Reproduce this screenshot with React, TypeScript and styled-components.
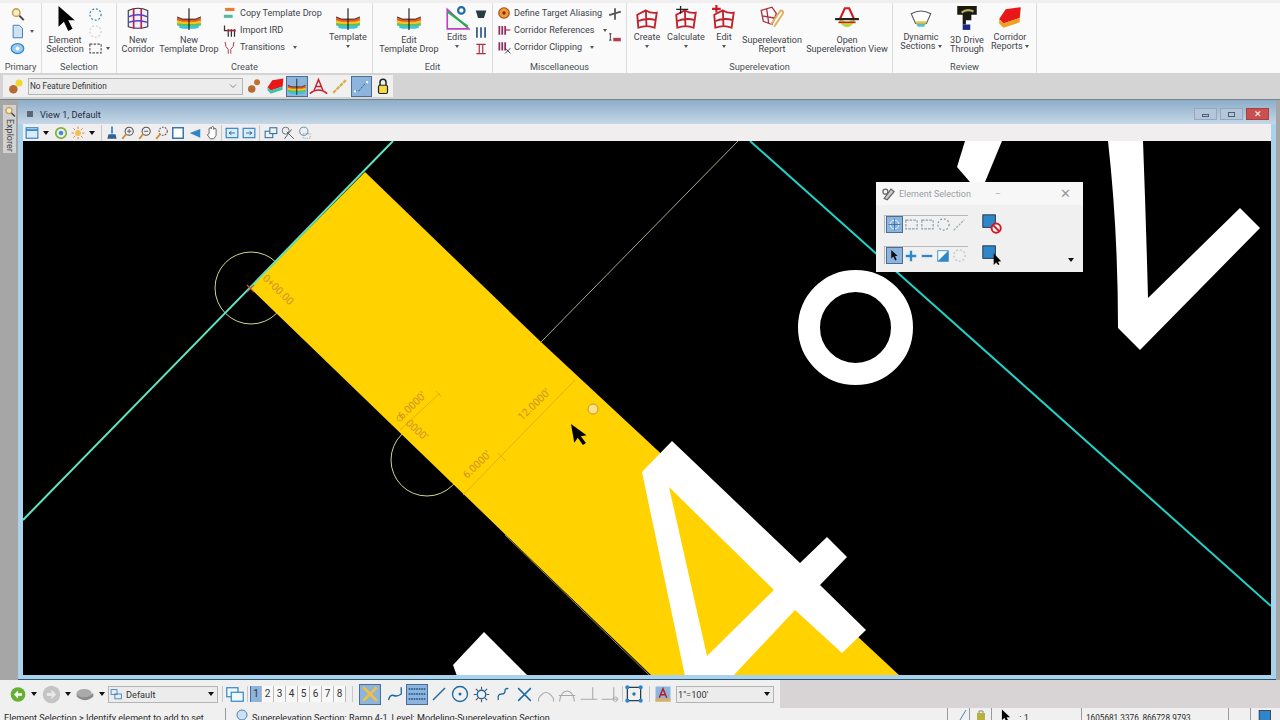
import React, { ReactNode } from "react"
import styled, { createGlobalStyle } from "styled-components"

const GlobalStyle = createGlobalStyle`
  html, body { margin: 0; padding: 0; background: #d6d4d4; overflow: hidden; }
  body { font-family: Roboto, "Liberation Sans", Arial, sans-serif; color: #3a3f45; }
`

const Ico = ({ s = 16, children }: { s?: number; children: ReactNode }) => (
  <svg width={s} height={s} viewBox="0 0 24 24" fill="none">
    {children}
  </svg>
)

const Pointer = () => <path d="M5 1 V19 L9.5 15 L13 23 L16.5 21.5 L13 14 L19 14 Z" fill="#000" />

const Bands = ({ lift = 0 }: { lift?: number }) => (
  <g transform={`translate(0 ${lift})`}>
    <path d="M1 11 L6 13 H18 L23 11 V15 L18 16 H6 L1 15Z" fill="#e8572a" />
    <path d="M1 14 L6 15.5 H18 L23 14 V17 L18 18 H6 L1 17Z" fill="#f5c518" />
    <path d="M1 16.5 L6 17.5 H18 L23 16.5 V19 L18 20 H6 L1 19Z" fill="#5cc06a" />
    <path d="M3 18.5 L6 19.5 H18 L21 18.5 V21 L18 22 H6 L3 21Z" fill="#3cc4dc" />
    <path d="M1 11 L6 13 H18 L23 11" stroke="#222" strokeWidth="0.8" />
  </g>
)

const TemplateIco = ({ s = 26 }: { s?: number }) => (
  <Ico s={s}>
    <Bands />
    <path d="M12 3 V23" stroke="#111" strokeWidth="1" />
  </Ico>
)

const Grid = () => (
  <path
    d="M3 9 L11 5 Q16 8 21 7 L19 21 Q12 18 4 21Z M3.5 15 Q12 11.5 20 14 M11 5.5 L11.5 19"
    stroke="#c2202c"
    strokeWidth="1.7"
  />
)

const Zoomer = ({ s = 15 }: { s?: number }) => (
  <Ico s={s}>
    <circle cx="10" cy="9" r="6" stroke="#c8a24a" strokeWidth="2.5" fill="#f6edd0" />
    <path d="M15 14 L22 21" stroke="#444" strokeWidth="3" />
  </Ico>
)

const Caret = styled.span`
  display: inline-block;
  width: 0;
  height: 0;
  border-left: 2.5px solid transparent;
  border-right: 2.5px solid transparent;
  border-top: 3px solid #555;
  vertical-align: middle;
`

const DarkCaret = styled(Caret)`
  border-left-width: 3.5px;
  border-right-width: 3.5px;
  border-top: 4px solid #111;
`

const Page = styled.div`
  width: 1280px;
  height: 720px;
  display: flex;
  flex-direction: column;
  overflow: hidden;
`

const Ribbon = styled.div`
  height: 73px;
  flex: none;
  display: flex;
  background: #fafafa;
  border-top: 3px solid #f0eeee;
  box-sizing: border-box;
`

const Group = styled.section<{ $w: number }>`
  width: ${(p) => p.$w}px;
  flex: none;
  box-sizing: border-box;
  border-right: 1px solid #dcdcdc;
  display: flex;
  flex-direction: column;
  padding-top: 2px;
`

const GroupBody = styled.div`
  height: 56px;
  display: flex;
`

const GroupLabel = styled.div`
  font-size: 9.2px;
  line-height: 11px;
  text-align: center;
  color: #4a4f55;
`

const TallButton = styled.div<{ $w: number; $raised?: boolean }>`
  width: ${(p) => p.$w}px;
  flex: none;
  display: flex;
  flex-direction: column;
  align-items: center;
  font-size: 9.1px;
  line-height: 8.6px;
  text-align: center;
  color: #3f444a;
  white-space: nowrap;
  svg { height: 26px; flex: none; }
  & > div { margin-top: ${(p) => (p.$raised ? 2 : 5)}px; }
`

const MiniColumn = styled.div<{ $w: number; $left?: number }>`
  width: ${(p) => p.$w}px;
  margin-left: ${(p) => p.$left ?? 0}px;
  flex: none;
  display: flex;
  flex-direction: column;
  align-items: center;
  justify-content: space-between;
  height: 49px;
  padding-top: 2px;
`

const MiniRow = styled.div`
  display: flex;
  align-items: center;
  gap: 5px;
  align-self: flex-start;
  margin-left: 9.5px;
`

const SelectRow = styled(MiniRow)`
  margin-left: -0.5px;
  gap: 3px;
  white-space: nowrap;
`

const ListColumn = styled.div<{ $w: number; $left?: number }>`
  width: ${(p) => p.$w}px;
  margin-left: ${(p) => p.$left ?? 0}px;
  flex: none;
  display: flex;
  flex-direction: column;
  gap: 3px;
  padding-top: 1px;
`

const ListRow = styled.div`
  height: 14px;
  display: flex;
  align-items: center;
  gap: 3px;
  font-size: 9.1px;
  color: #3f444a;
  white-space: nowrap;
  ${Caret} { margin-left: 5px; }
`

const ContextBar = styled.div`
  height: 27px;
  flex: none;
  box-sizing: border-box;
  background: #d4d4d4;
  border-bottom: 1px solid #77838d;
  padding: 2px 0 2px 3px;
`

const Strip = styled.div<{ $w: number }>`
  width: ${(p) => p.$w}px;
  height: 100%;
  background: #f1f0f0;
  display: flex;
  align-items: center;
`

const Cell = styled.div<{ $w?: number; $on?: boolean }>`
  width: ${(p) => p.$w ?? 21.5}px;
  height: 21px;
  flex: none;
  box-sizing: border-box;
  display: flex;
  align-items: center;
  justify-content: center;
  background: ${(p) => (p.$on ? "#8db4dc" : "transparent")};
  border: ${(p) => (p.$on ? "1px solid #4a6f96" : "none")};
`

const Combo = styled.div<{ $w: number; $left?: number; $size?: number }>`
  width: ${(p) => p.$w}px;
  margin-left: ${(p) => p.$left ?? 0}px;
  height: 17px;
  flex: none;
  box-sizing: border-box;
  border: 1px solid #b4b4b4;
  background: #ececec;
  display: flex;
  align-items: center;
  justify-content: space-between;
  padding: 0 3px 0 1px;
  font-size: ${(p) => p.$size ?? 9.2}px;
  color: #333;
`

const ComboLabel = styled.span`
  display: flex;
  align-items: center;
  gap: 3px;
`

const Workspace = styled.div`
  height: 580px;
  flex: none;
  display: flex;
  background: #a6a6a6;
`

const Rail = styled.div`
  width: 18px;
  flex: none;
  padding: 5px 0 0 3px;
  box-sizing: border-box;
`

const RailTab = styled.div`
  width: 13px;
  height: 48px;
  box-sizing: border-box;
  background: #d2d2d2;
  display: flex;
  flex-direction: column;
  align-items: center;
  padding-top: 1px;
  gap: 1px;
`

const RailText = styled.span`
  writing-mode: vertical-rl;
  font-size: 9px;
  color: #444;
`

const ViewWindow = styled.div`
  width: 1258px;
  flex: none;
  display: flex;
  flex-direction: column;
  box-sizing: border-box;
  background: #a9d2ec;
  padding: 0 5px 4px;
  border-bottom: 1px solid #2c5570;
`

const TitleBar = styled.div`
  height: 24px;
  flex: none;
  box-sizing: border-box;
  margin: 0 -5px;
  padding: 4px 7px 0 9px;
  background: linear-gradient(#8cadc9, #c5d7e6);
  display: flex;
  align-items: center;
  font-size: 9.2px;
  color: #1f2f3f;
  gap: 6px;
`

const TitleSquare = styled.span`
  width: 6px;
  height: 6px;
  background: #5c6670;
  margin-right: 1px;
`

const WinButtons = styled.div`
  margin-left: auto;
  display: flex;
  gap: 3px;
`

const WinButton = styled.div<{ $close?: boolean }>`
  width: 23px;
  height: 12px;
  box-sizing: border-box;
  background: ${(p) => (p.$close ? "#c8504e" : "#b4c7da")};
  border: 1px solid ${(p) => (p.$close ? "#a84040" : "#94a9be")};
  display: flex;
  align-items: center;
  justify-content: center;
  font-size: 9px;
  line-height: 9px;
  color: #fff;
`

const WinGlyph = styled.span<{ $flat?: boolean }>`
  width: 7px;
  height: ${(p) => (p.$flat ? 3 : 5)}px;
  margin-top: ${(p) => (p.$flat ? 3 : 0)}px;
  box-sizing: border-box;
  border: 1px solid #4c5f72;
`

const ViewTools = styled.div`
  height: 17px;
  flex: none;
  background: #f0eeee;
  display: flex;
  align-items: center;
  padding-left: 1px;
  ${Cell} { height: 17px; }
`

const ToolSep = styled.span<{ $w?: number }>`
  width: ${(p) => p.$w ?? 7}px;
  flex: none;
  height: 16px;
  display: flex;
  justify-content: center;
  &::before { content: ""; width: 1px; background: #c8c8c8; }
`

const Canvas = styled.div`
  position: relative;
  flex: 1;
  background: #000;
  overflow: hidden;
  svg.scene { display: block; }
`

const DimLabel = styled.text`
  font-family: Roboto, "Liberation Sans", sans-serif;
  font-size: 10.5px;
  fill: #c9942c;
`

const Dialog = styled.div`
  position: absolute;
  left: 853px;
  top: 41px;
  width: 207px;
  height: 90px;
  background: #f0f0f0;
`

const DialogTitle = styled.div`
  height: 23px;
  background: #f7f7f7;
  display: flex;
  align-items: center;
  padding: 0 12px 0 5px;
  gap: 3px;
  font-size: 9px;
  color: #9a9ea2;
`

const DialogMin = styled.span`
  margin-left: 21px;
  color: #aaa;
`

const DialogClose = styled.span`
  margin-left: auto;
  color: #999;
  font-size: 13px;
  line-height: 13px;
`

const DialogBody = styled.div`
  padding: 10px 9px 0 8px;
  display: flex;
  flex-direction: column;
  gap: 13px;
`

const DialogRow = styled.div`
  display: flex;
  align-items: center;
  height: 18px;
`

const SelectStrip = styled.div`
  width: 84px;
  height: 18px;
  flex: none;
  display: flex;
  box-sizing: border-box;
  border-top: 1px solid #b8b8b8;
  border-left: 1px solid #b8b8b8;
  padding-left: 1px;
  margin-right: 14px;
  ${Cell} { height: 17px; }
`

const RowCaret = styled.div`
  margin-left: auto;
  padding-top: 8px;
`

const BottomBar = styled.div`
  height: 28px;
  flex: none;
  display: flex;
  background: #d8d4d6;
`

const BottomStrip = styled.div`
  width: 780px;
  flex: none;
  box-sizing: border-box;
  background: #f0f0f0;
  display: flex;
  align-items: center;
  padding-left: 10px;
`

const PageNum = styled.div<{ $on?: boolean }>`
  width: 12px;
  height: 16px;
  flex: none;
  box-sizing: border-box;
  background: ${(p) => (p.$on ? "#8db4dc" : "#f8f8f8")};
  border-right: 1px solid #bbb;
  border-left: ${(p) => (p.$on ? "1px solid #4a6f96" : "none")};
  font-size: 10px;
  line-height: 16px;
  text-align: center;
  color: #333;
`

const StatusBar = styled.div`
  height: 12px;
  flex: none;
  background: #f0f0f0;
  display: flex;
  overflow: hidden;
  font-size: 9.1px;
  line-height: 12px;
  color: #2a2a2a;
  white-space: nowrap;
`

const StatusCell = styled.div<{ $w: number; $pad?: number; $line?: boolean; $size?: number }>`
  width: ${(p) => p.$w}px;
  flex: none;
  box-sizing: border-box;
  padding: 4px 0 0 ${(p) => p.$pad ?? 0}px;
  border-right: ${(p) => (p.$line ? "1px solid #999" : "none")};
  display: flex;
  gap: 4px;
  font-size: ${(p) => p.$size ?? 9.1}px;
  svg { flex: none; margin-top: -3px; }
`

const Blue = "#2f86c8"

const Dashed = ({ round, color = "#8a9aa8" }: { round?: boolean; color?: string }) => (
  <Ico s={15}>
    {round ? (
      <circle cx="12" cy="12" r="9" stroke={color} strokeWidth="2" strokeDasharray="3 3" />
    ) : (
      <rect x="3" y="5" width="18" height="14" stroke={color} strokeWidth="1.8" strokeDasharray="4 2" />
    )}
  </Ico>
)

const BlueSquare = () => (
  <Ico s={17}>
    <rect x="3" y="2" width="16" height="16" fill={Blue} stroke="#123" strokeWidth="1" />
  </Ico>
)

const DriveIco = () => (
  <Ico s={26}>
    <path d="M3 1 H21 V9 H16 V14 H11 V18 H8 V9 H3Z" fill="#1a1a10" />
    <path d="M7 7 Q12 3 18 6" stroke="#b8b060" strokeWidth="2" />
    <rect x="8" y="18" width="7" height="5" fill="#1a2a80" />
  </Ico>
)

const Scene = () => (
  <svg className="scene" width="1248" height="535" viewBox="23 141 1248 535" fill="none">
    <line x1="750" y1="141" x2="1271" y2="606" stroke="#20d2c8" strokeWidth="2" />
    <line x1="541" y1="342" x2="738" y2="141" stroke="#a9a98a" strokeWidth="1" />
    <circle cx="251" cy="288" r="36" stroke="#c8d890" strokeWidth="1" />
    <circle cx="427" cy="460" r="36" stroke="#c8d890" strokeWidth="1" />
    <polygon points="365,172 250,288 652,676 900,676 541,342" fill="#ffd200" />
    <line x1="23" y1="520" x2="393" y2="141" stroke="#5fe6c4" strokeWidth="2" />
    <line x1="505" y1="535" x2="650" y2="676" stroke="#8a8230" strokeWidth="1" />
    <path d="M247 285 L254 292 M254 285 L247 292" stroke="#c06030" strokeWidth="1.2" />
    <g stroke="#d8a818" strokeWidth="0.8">
      <line x1="463" y1="495" x2="575" y2="380" />
      <line x1="400" y1="430" x2="440" y2="393" />
      <path d="M498 453 L506 461 M436 391 L441 397" />
    </g>
    <DimLabel transform="translate(262 279) rotate(44)">0+00.00</DimLabel>
    <DimLabel transform="translate(402 420) rotate(-44)">6.0000'</DimLabel>
    <DimLabel transform="translate(522 421) rotate(-44)">12.0000'</DimLabel>
    <DimLabel transform="translate(467 479) rotate(-44)">6.0000'</DimLabel>
    <DimLabel transform="translate(405 424) rotate(42)">0000'</DimLabel>
    <circle cx="400" cy="418" r="3" stroke="#c9942c" strokeWidth="0.8" />
    <circle cx="593" cy="409" r="5" fill="#ffe084" stroke="#b89a40" strokeWidth="1" />
    <path
      d="M0 0 V20 L4.5 15.5 L8.5 24 L12 22.5 L8 14.5 L14 14.5 Z"
      transform="translate(571 424) rotate(-10) scale(.95)"
      fill="#000"
    />
    <path
      d="M642 472 L672 441 L800 563 L827 537 L847 557 L820 585 L866 630 L842 653 L795 610 L733 676 L685 676 Z M669 487 L707 656 L774 590 Z"
      fill="#fff"
      fillRule="evenodd"
    />
    <polygon points="453,665 484,632 528,676 457,676" fill="#fff" />
    <circle cx="855.5" cy="327.5" r="46.5" stroke="#fff" strokeWidth="22" />
    <path d="M1108 141 H1143 Q1146 220 1148 298 L1240 208 L1260 228 L1140 350 L1118 328 Q1118 230 1108 141Z" fill="#fff" />
    <polygon points="965,141 1002,141 985,182 970,182 957,167" fill="#fff" />
  </svg>
)

export default function App() {
  return (
    <Page>
      <GlobalStyle />
      <Ribbon>
        <Group $w={42}>
          <GroupBody>
            <MiniColumn $w={34}>
              <Zoomer />
              <MiniRow>
                <Ico s={15}>
                  <path d="M5 2 H15 L20 7 V22 H5Z" fill="#cfe2f4" stroke="#4a80b4" strokeWidth="1.6" />
                </Ico>
                <Caret />
              </MiniRow>
              <Ico s={15}>
                <ellipse cx="12" cy="12" rx="10" ry="8" fill="#9ccbec" stroke={Blue} strokeWidth="2" />
                <circle cx="12" cy="12" r="3" fill="#fff" />
              </Ico>
            </MiniColumn>
          </GroupBody>
          <GroupLabel>Primary</GroupLabel>
        </Group>

        <Group $w={75}>
          <GroupBody>
            <TallButton $w={46}>
              <Ico s={26}>
                <path d="M6 1 V20 L11 15.5 L15 24 L19 22 L15 14 L21 14 Z" fill="#000" />
              </Ico>
              <div>
                Element
                <br />
                Selection
              </div>
            </TallButton>
            <MiniColumn $w={14}>
              <Dashed round color={Blue} />
              <Dashed round color="#d0d0d0" />
              <SelectRow>
                <Dashed color="#555" />
                <Caret />
              </SelectRow>
            </MiniColumn>
          </GroupBody>
          <GroupLabel>Selection</GroupLabel>
        </Group>

        <Group $w={256}>
          <GroupBody>
            <TallButton $w={42}>
              <Ico s={26}>
                <path d="M3 5 Q12 1 21 5 V20 Q12 23 3 20Z" stroke="#333" strokeWidth="1" fill="#eef" />
                <path d="M8 3 V22 M15 3 V22" stroke="#c02040" strokeWidth="1.5" />
                <path d="M3 11 Q12 7 21 11 M3 16 Q12 13 21 16" stroke="#5040c0" strokeWidth="1.3" />
              </Ico>
              <div>
                New
                <br />
                Corridor
              </div>
            </TallButton>
            <TallButton $w={60}>
              <TemplateIco />
              <div>
                New
                <br />
                Template Drop
              </div>
            </TallButton>
            <ListColumn $w={104} $left={3}>
              <ListRow>
                <Ico s={15}>
                  <path d="M5 3 H20 V8 H5Z" fill="#ee7a30" />
                  <path d="M3 14 H17 V19 H3Z" fill="#58b8a0" />
                </Ico>
                Copy Template Drop
              </ListRow>
              <ListRow>
                <Ico s={15}>
                  <path d="M4 4 V12 H8 M10 10 V22 M15 10 V22 M20 10 V22" stroke="#333" strokeWidth="2" />
                  <path d="M8 12 H22" stroke="#a03040" strokeWidth="3" />
                </Ico>
                Import IRD
              </ListRow>
              <ListRow>
                <Ico s={15}>
                  <path d="M5 3 Q5 12 10 15 V22 M19 3 Q19 12 14 15 V22" stroke="#b04050" strokeWidth="1.6" />
                </Ico>
                Transitions
                <Caret />
              </ListRow>
            </ListColumn>
            <TallButton $w={44} $raised>
              <TemplateIco />
              <div>
                Template
                <br />
                <Caret />
              </div>
            </TallButton>
          </GroupBody>
          <GroupLabel>Create</GroupLabel>
        </Group>

        <Group $w={120}>
          <GroupBody>
            <MiniColumn $w={4} />
            <TallButton $w={64}>
              <TemplateIco />
              <div>
                Edit
                <br />
                Template Drop
              </div>
            </TallButton>
            <TallButton $w={32} $raised>
              <Ico s={26}>
                <path d="M3 4 V22 H23 Z" stroke="#c040c0" strokeWidth="1.5" fill="#eef8ee" />
                <path d="M3 6 L22 20" stroke="#20b050" strokeWidth="2" />
                <circle cx="16" cy="5" r="3" stroke="#1a6aa8" strokeWidth="2" />
              </Ico>
              <div>
                Edits
                <br />
                <Caret />
              </div>
            </TallButton>
            <MiniColumn $w={16}>
              <Ico s={14}>
                <path d="M3 6 H21 L17 19 H7Z" fill="#2a3a44" />
              </Ico>
              <Ico s={14}>
                <path d="M5 4 V22 M12 4 V22 M19 4 V22" stroke="#345a94" strokeWidth="3" />
              </Ico>
              <Ico s={14}>
                <path d="M4 4 H20 M4 20 H20 M9 4 V20 M15 4 V20" stroke="#b03040" strokeWidth="2" />
              </Ico>
            </MiniColumn>
          </GroupBody>
          <GroupLabel>Edit</GroupLabel>
        </Group>

        <Group $w={134}>
          <GroupBody>
            <ListColumn $w={111} $left={4}>
              <ListRow>
                <Ico s={14}>
                  <circle cx="12" cy="12" r="9" fill="#e8a030" stroke="#b04020" strokeWidth="2" />
                  <circle cx="12" cy="12" r="3" fill="#902020" />
                </Ico>
                Define Target Aliasing
              </ListRow>
              <ListRow>
                <Ico s={14}>
                  <path d="M4 5 V20 M9 5 V20 M14 5 V20" stroke="#903060" strokeWidth="3" />
                  <path d="M15 12 H23" stroke="#c02040" strokeWidth="2" />
                </Ico>
                Corridor References
                <Caret />
              </ListRow>
              <ListRow>
                <Ico s={14}>
                  <path d="M4 4 V18 M9 4 V18 M14 4 V18" stroke="#903060" strokeWidth="3" />
                  <path d="M14 14 L23 23 M23 14 L14 23" stroke="#333" strokeWidth="1.6" />
                </Ico>
                Corridor Clipping
                <Caret />
              </ListRow>
            </ListColumn>
            <MiniColumn $w={14}>
              <Ico s={14}>
                <path d="M2 14 L22 8 M12 2 V22" stroke="#555" strokeWidth="3" />
              </Ico>
              <Ico s={14}>
                <path d="M4 3 V14 M2 3 H6 M2 14 H6" stroke="#333" strokeWidth="1.6" />
                <rect x="9" y="10" width="13" height="6" fill="#b04050" />
              </Ico>
              <span />
            </MiniColumn>
          </GroupBody>
          <GroupLabel>Miscellaneous</GroupLabel>
        </Group>

        <Group $w={266}>
          <GroupBody>
            <TallButton $w={40} $raised>
              <Ico s={26}>
                <Grid />
              </Ico>
              <div>
                Create
                <br />
                <Caret />
              </div>
            </TallButton>
            <TallButton $w={38} $raised>
              <Ico s={26}>
                <Grid />
                <path d="M3 4 H14 M7 1 V8" stroke="#222" strokeWidth="1.2" />
              </Ico>
              <div>
                Calculate
                <br />
                <Caret />
              </div>
            </TallButton>
            <TallButton $w={38} $raised>
              <Ico s={26}>
                <Grid />
                <path d="M5 0 V7 M1 3.5 H9" stroke="#d01828" strokeWidth="2" />
              </Ico>
              <div>
                Edit
                <br />
                <Caret />
              </div>
            </TallButton>
            <TallButton $w={58}>
              <Ico s={26}>
                <path d="M2 5 L12 2 L16 8 L12 18 L4 15Z M7 3 L9 17 M3 10 L14 12" stroke="#a83040" strokeWidth="1.2" />
                <path d="M14 20 L22 8 Q23 5 20 5 L11 18" stroke="#e0b060" strokeWidth="1.8" />
              </Ico>
              <div>
                Superelevation
                <br />
                Report
              </div>
            </TallButton>
            <TallButton $w={92}>
              <Ico s={26}>
                <path d="M6 14 Q12 24 18 14 L14 17 H10Z" stroke="#b8d840" strokeWidth="3" />
                <path d="M5 14 L10 3 H14 L19 14" stroke="#d81820" strokeWidth="2" />
                <path d="M1 13 H23" stroke="#222" strokeWidth="2" />
                <path d="M4 16 H20" stroke="#d81820" strokeWidth="1.4" />
              </Ico>
              <div>
                Open
                <br />
                Superelevation View
              </div>
            </TallButton>
          </GroupBody>
          <GroupLabel>Superelevation</GroupLabel>
        </Group>

        <Group $w={144}>
          <GroupBody>
            <MiniColumn $w={6} />
            <TallButton $w={44} $raised>
              <Ico s={26}>
                <path d="M3 8 Q12 3 21 8 L17 17 H7Z" stroke="#556" strokeWidth="1" fill="#fff" />
                <path d="M7 15 H17 L16 19 H8Z" fill="#f0c040" />
                <path d="M8 17 H16 L15 20 H9Z" fill="#50c0d0" />
              </Ico>
              <div>
                Dynamic
                <br />
                Sections <Caret />
              </div>
            </TallButton>
            <TallButton $w={48}>
              <DriveIco />
              <div>
                3D Drive
                <br />
                Through
              </div>
            </TallButton>
            <TallButton $w={38} $raised>
              <Ico s={26}>
                <path d="M2 13 L8 4 L22 2 L21 12 L6 17Z" fill="#e81818" />
                <path d="M2 13 L6 17 L21 12 V16 L6 21 L2 17Z" fill="#f0a020" />
              </Ico>
              <div>
                Corridor
                <br />
                Reports <Caret />
              </div>
            </TallButton>
          </GroupBody>
          <GroupLabel>Review</GroupLabel>
        </Group>
      </Ribbon>

      <ContextBar>
        <Strip $w={390}>
          <Cell $w={25}>
            <Ico s={17}>
              <circle cx="9" cy="16" r="6" fill="#b86a30" />
              <circle cx="17" cy="7" r="5" fill="#f0d830" />
            </Ico>
          </Cell>
          <Combo $w={215} $size={8.2}>
            No Feature Definition
            <Ico s={12}>
              <path d="M6 9 L12 15 L18 9" stroke="#888" strokeWidth="2" />
            </Ico>
          </Combo>
          <Cell>
            <Ico s={18}>
              <circle cx="9" cy="16" r="5" fill="#b86a30" />
              <circle cx="16" cy="7" r="4" fill="#c07030" />
            </Ico>
          </Cell>
          <Cell>
            <Ico s={19}>
              <path d="M2 13 L8 4 L22 2 L21 12 L6 17Z" fill="#e81818" />
              <path d="M2 13 L6 17 L21 12 V16 L6 21 L2 17Z" fill="#40c0b0" />
            </Ico>
          </Cell>
          <Cell $on>
            <TemplateIco s={20} />
          </Cell>
          <Cell>
            <Ico s={19}>
              <path d="M6 18 L12 3 L18 18 M8 12 H16 M1 21 Q12 12 23 21" stroke="#c82030" strokeWidth="1.8" />
            </Ico>
          </Cell>
          <Cell>
            <Ico s={19}>
              <path d="M4 20 L20 4" stroke="#d8b050" strokeWidth="3" strokeDasharray="5 1" />
            </Ico>
          </Cell>
          <Cell $on>
            <Ico s={17}>
              <path d="M3 19 L10 17 L14 11 L20 6" stroke="#1c4f88" strokeWidth="1.2" strokeDasharray="3 2" />
              <circle cx="20" cy="6" r="1.6" fill="#fff" />
              <circle cx="3" cy="19" r="1.6" fill="#fff" />
            </Ico>
          </Cell>
          <Cell>
            <Ico s={18}>
              <path d="M8 11 V7 a4 4 0 0 1 8 0 V11" stroke="#222" strokeWidth="2" />
              <rect x="6" y="11" width="12" height="11" rx="2" fill="#f4dc40" stroke="#222" strokeWidth="1.6" />
            </Ico>
          </Cell>
        </Strip>
      </ContextBar>

      <Workspace>
        <Rail>
          <RailTab>
            <Zoomer s={12} />
            <RailText>Explorer</RailText>
          </RailTab>
        </Rail>
        <ViewWindow>
          <TitleBar>
            <TitleSquare />
            View 1, Default
            <WinButtons>
              <WinButton>
                <WinGlyph $flat />
              </WinButton>
              <WinButton>
                <WinGlyph />
              </WinButton>
              <WinButton $close>✕</WinButton>
            </WinButtons>
          </TitleBar>
          <ViewTools>
            <Cell $w={16}>
              <Ico s={14}>
                <rect x="2" y="3" width="20" height="18" fill="#dcebf8" stroke={Blue} strokeWidth="2" />
                <path d="M2 7 H22" stroke={Blue} strokeWidth="3" />
              </Ico>
            </Cell>
            <Cell $w={11}>
              <DarkCaret />
            </Cell>
            <Cell $w={20}>
              <Ico s={14}>
                <circle cx="12" cy="12" r="9" stroke="#80b040" strokeWidth="3" />
                <circle cx="12" cy="12" r="4" fill="#4090d0" />
              </Ico>
            </Cell>
            <Cell $w={14}>
              <Ico s={14}>
                <circle cx="12" cy="12" r="5" fill="#f0c050" />
                <path d="M12 1 V5 M12 19 V23 M1 12 H5 M19 12 H23 M4 4 L7 7 M17 17 L20 20 M20 4 L17 7 M7 17 L4 20" stroke="#e08040" strokeWidth="1.6" />
              </Ico>
            </Cell>
            <Cell $w={14}>
              <DarkCaret />
            </Cell>
            <ToolSep $w={5} />
            <Cell $w={15}>
              <Ico s={14}>
                <path d="M12 1 V13" stroke={Blue} strokeWidth="3" />
                <path d="M6 14 H18 L20 22 H4Z" fill="#345f94" />
              </Ico>
            </Cell>
            {["+", "-", "d"].map((k) => (
              <Cell key={k} $w={17}>
                <Ico s={14}>
                  <circle
                    cx="14"
                    cy="9"
                    r="7"
                    stroke="#555"
                    strokeWidth="1.8"
                    strokeDasharray={k === "d" ? "3 2" : undefined}
                  />
                  <path d="M9 14 L2 22" stroke="#c89030" strokeWidth="3" />
                  {k !== "d" && <path d="M10.5 9 H17.5" stroke="#555" strokeWidth="1.6" />}
                  {k === "+" && <path d="M14 5.5 V12.5" stroke="#555" strokeWidth="1.6" />}
                </Ico>
              </Cell>
            ))}
            <Cell $w={16}>
              <Ico s={14}>
                <rect x="3" y="3" width="18" height="18" fill="#fff" stroke="#2a70a8" strokeWidth="2.4" />
              </Ico>
            </Cell>
            <Cell $w={17}>
              <Ico s={14}>
                <path d="M21 5 V20 L3 12 Z" fill={Blue} />
              </Ico>
            </Cell>
            <Cell $w={17}>
              <Ico s={14}>
                <path d="M7 13 V5 a2 2 0 0 1 4 0 V3 a2 2 0 0 1 4 0 V6 a2 2 0 0 1 4 0 V16 L15 22 H9 L4 15Z" stroke="#555" strokeWidth="1.5" fill="#fff" />
              </Ico>
            </Cell>
            <ToolSep $w={3} />
            {[0, 1].map((k) => (
              <Cell key={k} $w={17}>
                <Ico s={14}>
                  <rect x="2" y="4" width="20" height="16" fill="#dcebf8" stroke={Blue} strokeWidth="2" />
                  <path d={k ? "M7 12 H17 M13 9 L17 12 L13 15" : "M7 12 H17 M11 9 L7 12 L11 15"} stroke="#1c5f98" strokeWidth="1.5" />
                </Ico>
              </Cell>
            ))}
            <ToolSep $w={5} />
            <Cell $w={17}>
              <Ico s={14}>
                <rect x="2" y="9" width="13" height="11" stroke="#2a70a8" strokeWidth="1.8" />
                <rect x="10" y="3" width="12" height="10" stroke="#2a70a8" strokeWidth="1.8" fill="#f0eeee" />
              </Ico>
            </Cell>
            <Cell $w={17}>
              <Ico s={14}>
                <circle cx="8" cy="8" r="6" stroke="#607080" strokeWidth="1.6" />
                <path d="M10 10 L22 22 M18 6 L6 22" stroke="#555" strokeWidth="1.6" />
              </Ico>
            </Cell>
            <Cell $w={17}>
              <Ico s={14}>
                <circle cx="10" cy="9" r="7" stroke="#4a90b8" strokeWidth="1.6" />
                <rect x="9" y="13" width="12" height="8" stroke="#999" strokeWidth="1.4" strokeDasharray="2 2" />
              </Ico>
            </Cell>
          </ViewTools>
          <Canvas>
            <Scene />
            <Dialog>
              <DialogTitle>
                <Ico s={15}>
                  <path d="M5 20 L16 5 L21 9 L10 22Z" stroke="#666" strokeWidth="2" fill="#ccc" />
                  <circle cx="7" cy="9" r="4" stroke="#666" strokeWidth="2" />
                </Ico>
                Element Selection
                <DialogMin>–</DialogMin>
                <DialogClose>✕</DialogClose>
              </DialogTitle>
              <DialogBody>
                <DialogRow>
                  <SelectStrip>
                    <Cell $w={17} $on>
                      <Ico s={13}>
                        <circle cx="12" cy="12" r="8" stroke="#fff" strokeWidth="1.5" />
                        <path d="M1 12 H23 M12 1 V23" stroke="#2a70a8" strokeWidth="1.5" />
                      </Ico>
                    </Cell>
                    <Cell $w={16}>
                      <Dashed />
                    </Cell>
                    <Cell $w={16}>
                      <Dashed />
                    </Cell>
                    <Cell $w={16}>
                      <Dashed round />
                    </Cell>
                    <Cell $w={16}>
                      <Ico s={14}>
                        <path d="M3 21 L21 3" stroke="#9aa" strokeWidth="2" strokeDasharray="4 2" />
                      </Ico>
                    </Cell>
                  </SelectStrip>
                  <Ico s={20}>
                    <rect x="1" y="1" width="15" height="15" fill={Blue} stroke="#123" strokeWidth="1" />
                    <circle cx="17" cy="17" r="5.5" fill="#fff" stroke="#d01c28" strokeWidth="2.4" />
                    <path d="M13 13 L21 21" stroke="#d01c28" strokeWidth="2.4" />
                  </Ico>
                </DialogRow>
                <DialogRow>
                  <SelectStrip>
                    <Cell $w={17} $on>
                      <Ico s={13}>
                        <path d="M6 2 V18 L10 14 L13 21 L16 20 L13 13 L18 13Z" fill="#111" />
                      </Ico>
                    </Cell>
                    <Cell $w={16}>
                      <Ico s={14}>
                        <path d="M3 12 H21 M12 3 V21" stroke={Blue} strokeWidth="4" />
                      </Ico>
                    </Cell>
                    <Cell $w={16}>
                      <Ico s={14}>
                        <path d="M3 12 H21" stroke={Blue} strokeWidth="4" />
                      </Ico>
                    </Cell>
                    <Cell $w={16}>
                      <Ico s={14}>
                        <rect x="3" y="3" width="18" height="18" fill="#fff" stroke={Blue} strokeWidth="1.5" />
                        <path d="M21 3 V21 H3Z" fill={Blue} />
                      </Ico>
                    </Cell>
                    <Cell $w={16}>
                      <Dashed round color="#c0c0c0" />
                    </Cell>
                  </SelectStrip>
                  <Ico s={20}>
                    <rect x="1" y="1" width="15" height="15" fill={Blue} stroke="#123" strokeWidth="1" />
                    <path d="M14 10 V24 L17 21 L19.5 24 L21 23 L19 20 L23 19.5Z" fill="#000" />
                  </Ico>
                  <RowCaret>
                    <DarkCaret />
                  </RowCaret>
                </DialogRow>
              </DialogBody>
            </Dialog>
          </Canvas>
        </ViewWindow>
      </Workspace>

      <BottomBar>
        <BottomStrip>
          <Cell $w={16}>
            <Ico s={19}>
              <circle cx="12" cy="12" r="11" fill="#66b032" />
              <path d="M6 12 L12 6 V10 H18 V14 H12 V18Z" fill="#fff" />
            </Ico>
          </Cell>
          <Cell $w={15}>
            <DarkCaret />
          </Cell>
          <Cell $w={20}>
            <Ico s={19}>
              <circle cx="12" cy="12" r="11" fill="#c4c4c4" />
              <path d="M18 12 L12 6 V10 H6 V14 H12 V18Z" fill="#e8e8e8" />
            </Ico>
          </Cell>
          <Cell $w={14}>
            <DarkCaret />
          </Cell>
          <Cell $w={20}>
            <Ico s={20}>
              <path d="M2 15 Q12 24 22 15 V11 Q12 18 2 11Z" fill="#8c8c8c" />
              <ellipse cx="11" cy="11" rx="9" ry="5" fill="#aaa" />
            </Ico>
          </Cell>
          <Cell $w={13}>
            <DarkCaret />
          </Cell>
          <Combo $w={110}>
            <ComboLabel>
              <Ico s={13}>
                <rect x="2" y="3" width="11" height="9" stroke={Blue} strokeWidth="1.6" />
                <rect x="9" y="11" width="12" height="9" stroke={Blue} strokeWidth="1.6" />
              </Ico>
              Default
            </ComboLabel>
            <DarkCaret />
          </Combo>
          <ToolSep $w={8} />
          <Cell $w={18}>
            <Ico s={19}>
              <rect x="1" y="3" width="15" height="12" fill="#f0f8ff" stroke={Blue} strokeWidth="1.6" />
              <rect x="7" y="9" width="16" height="12" fill="#f0f8ff" stroke={Blue} strokeWidth="1.6" />
            </Ico>
          </Cell>
          <ToolSep $w={6} />
          {[1, 2, 3, 4, 5, 6, 7, 8].map((n) => (
            <PageNum key={n} $on={n === 1}>
              {n}
            </PageNum>
          ))}
          <ToolSep $w={13} />
          <Cell $w={22} $on>
            <Ico s={18}>
              <path d="M3 3 L21 21 M21 3 L3 21" stroke="#f2c040" strokeWidth="3.5" />
            </Ico>
          </Cell>
          <Cell $w={5} />
          <Cell $w={20}>
            <Ico s={18}>
              <path d="M2 20 Q4 12 9 14 T19 12 V3" stroke="#1c6aa0" strokeWidth="1.8" />
            </Ico>
          </Cell>
          <Cell $w={22} $on>
            <Ico s={20}>
              <path d="M2 6 H22 M2 12 H22 M2 18 H22" stroke="#386a9c" strokeWidth="2.4" strokeDasharray="2 1" />
            </Ico>
          </Cell>
          <Cell $w={21}>
            <Ico s={16}>
              <path d="M3 21 L21 3" stroke="#1c6aa0" strokeWidth="2" />
            </Ico>
          </Cell>
          <Cell $w={21}>
            <Ico s={18}>
              <circle cx="12" cy="12" r="10" stroke="#1c6aa0" strokeWidth="1.8" />
              <circle cx="12" cy="12" r="2" fill="#1c6aa0" />
            </Ico>
          </Cell>
          <Cell $w={22}>
            <Ico s={17}>
              <circle cx="12" cy="12" r="6" stroke="#1c6aa0" strokeWidth="2" />
              <path d="M12 1 V5 M12 19 V23 M1 12 H5 M19 12 H23 M4 4 L7 7 M17 17 L20 20 M20 4 L17 7 M7 17 L4 20" stroke="#555" strokeWidth="1.6" />
            </Ico>
          </Cell>
          <Cell $w={21}>
            <Ico s={16}>
              <path d="M5 21 Q3 12 10 12 Q15 12 15 7 Q15 3 20 4" stroke="#1c6aa0" strokeWidth="2" />
            </Ico>
          </Cell>
          <Cell $w={22}>
            <Ico s={17}>
              <path d="M3 3 L21 21 M21 3 L3 21" stroke="#1c6aa0" strokeWidth="2" />
            </Ico>
          </Cell>
          <Cell $w={21}>
            <Ico s={18}>
              <path d="M2 22 V18 Q12 2 22 18 V22" stroke="#a8a8a8" strokeWidth="1.4" />
            </Ico>
          </Cell>
          <Cell $w={22}>
            <Ico s={18}>
              <path d="M2 22 Q4 8 12 8 T22 22 M1 14 H23" stroke="#a8a8a8" strokeWidth="1.4" />
            </Ico>
          </Cell>
          <Cell $w={21}>
            <Ico s={18}>
              <path d="M1 19 H23 M17 3 V19" stroke="#a8a8a8" strokeWidth="1.4" />
            </Ico>
          </Cell>
          <Cell $w={21}>
            <Ico s={18}>
              <path d="M1 19 H23 M17 3 V19" stroke="#a8a8a8" strokeWidth="1.4" />
              <circle cx="19" cy="19" r="3" stroke="#a8a8a8" strokeWidth="1.2" />
            </Ico>
          </Cell>
          <ToolSep $w={4} />
          <Cell $w={20}>
            <Ico s={20}>
              <rect x="4" y="4" width="16" height="16" stroke="#1c2c3c" strokeWidth="1.4" />
              <circle cx="12" cy="12" r="2" fill="#2a70a8" />
              <path d="M4 4 h.01 M20 4 h.01 M4 20 h.01 M20 20 h.01" stroke="#2a86d0" strokeWidth="5" strokeLinecap="round" />
            </Ico>
          </Cell>
          <ToolSep $w={10} />
          <Cell $w={18}>
            <Ico s={18}>
              <rect x="2" y="2" width="20" height="20" fill="#8cb8e0" />
              <path d="M7 17 L12 5 L17 17 M9 13 H15" stroke="#c01820" strokeWidth="2" />
              <rect x="2" y="18" width="20" height="4" fill="#e0b050" />
            </Ico>
          </Cell>
          <Combo $w={98} $left={4}>
            1"=100'
            <DarkCaret />
          </Combo>
        </BottomStrip>
      </BottomBar>

      <StatusBar>
        <StatusCell $w={226} $pad={4} $line>
          Element Selection &gt; Identify element to add to set
        </StatusCell>
        <StatusCell $w={722} $pad={10} $line>
          <Ico s={12}>
            <circle cx="12" cy="12" r="10" fill="#cfe0f0" stroke="#4a80b4" strokeWidth="2" />
          </Ico>
          Superelevation Section: Ramp 4-1, Level: Modeling-Superelevation Section
        </StatusCell>
        <StatusCell $w={22} $pad={9} $line>
          <Ico s={12}>
            <path d="M6 22 L18 2" stroke="#5080b0" strokeWidth="2" />
          </Ico>
        </StatusCell>
        <StatusCell $w={22} $pad={5} $line>
          <Ico s={12}>
            <rect x="4" y="8" width="16" height="14" fill="#b8b040" />
            <path d="M8 8 V4 H16 V8" stroke="#888" strokeWidth="2" />
          </Ico>
        </StatusCell>
        <StatusCell $w={90} $pad={7} $line>
          <Ico s={14}>
            <Pointer />
          </Ico>
          <span>&nbsp;: 1</span>
        </StatusCell>
        <StatusCell $w={147} $pad={4} $line $size={8.2}>
          1605681.3376, 866728.9793
        </StatusCell>
        <StatusCell $w={22} $line />
        <StatusCell $w={26} $pad={6}>
          <BlueSquare />
        </StatusCell>
      </StatusBar>
    </Page>
  )
}
